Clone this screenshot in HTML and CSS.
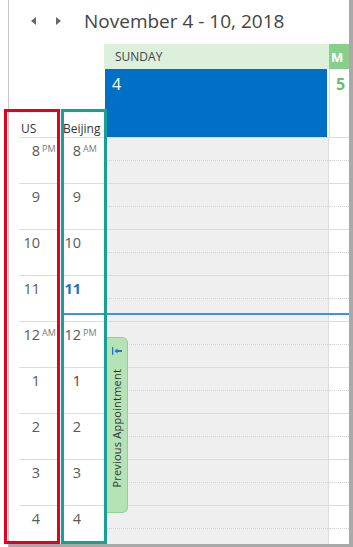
FILE: index.html
```html
<!DOCTYPE html>
<html>
<head>
<meta charset="utf-8">
<link rel="stylesheet" href="styles.css">
</head>
<body>
<div class="screen">
  <div class="app">
    <header class="top">
      <span class="tri tri-l"></span>
      <span class="tri tri-r"></span>
      <h1 class="title">November 4 - 10, 2018</h1>
    </header>
    <div class="main">
      <div class="gutter">
        <div class="tz us">
          <div class="tz-head">US</div>
          <div class="hr"><span class="num">8</span><span class="ap">PM</span></div>
          <div class="hr"><span class="num">9</span></div>
          <div class="hr"><span class="num">10</span></div>
          <div class="hr"><span class="num">11</span></div>
          <div class="hr"><span class="num">12</span><span class="ap">AM</span></div>
          <div class="hr"><span class="num">1</span></div>
          <div class="hr"><span class="num">2</span></div>
          <div class="hr"><span class="num">3</span></div>
          <div class="hr"><span class="num">4</span></div>
        </div>
        <div class="tz bj">
          <div class="tz-head">Beijing</div>
          <div class="hr"><span class="num">8</span><span class="ap">AM</span></div>
          <div class="hr"><span class="num">9</span></div>
          <div class="hr"><span class="num">10</span></div>
          <div class="hr"><span class="num now">11</span></div>
          <div class="hr"><span class="num">12</span><span class="ap">PM</span></div>
          <div class="hr"><span class="num red">1</span></div>
          <div class="hr"><span class="num">2</span></div>
          <div class="hr"><span class="num">3</span></div>
          <div class="hr"><span class="num">4</span></div>
        </div>
      </div>
      <div class="day sun">
        <div class="dhead">SUNDAY</div>
        <div class="ddate">4</div>
        <div class="grid">
          <div class="slot"><div class="half"></div><div class="half"></div></div>
          <div class="slot"><div class="half"></div><div class="half"></div></div>
          <div class="slot"><div class="half"></div><div class="half"></div></div>
          <div class="slot"><div class="half"></div><div class="half"></div></div>
          <div class="slot"><div class="half"></div><div class="half"></div></div>
          <div class="slot"><div class="half"></div><div class="half"></div></div>
          <div class="slot"><div class="half"></div><div class="half"></div></div>
          <div class="slot"><div class="half"></div><div class="half"></div></div>
          <div class="slot"><div class="half"></div><div class="half"></div></div>
        </div>
      </div>
      <div class="day mon">
        <div class="dhead">M</div>
        <div class="ddate">5</div>
        <div class="grid">
          <div class="slot"><div class="half"></div><div class="half"></div></div>
          <div class="slot"><div class="half"></div><div class="half"></div></div>
          <div class="slot"><div class="half"></div><div class="half"></div></div>
          <div class="slot"><div class="half"></div><div class="half"></div></div>
          <div class="slot"><div class="half"></div><div class="half"></div></div>
          <div class="slot"><div class="half"></div><div class="half"></div></div>
          <div class="slot"><div class="half"></div><div class="half"></div></div>
          <div class="slot"><div class="half"></div><div class="half"></div></div>
          <div class="slot"><div class="half"></div><div class="half"></div></div>
        </div>
      </div>
    </div>
  </div>
  <div class="nowline"></div>
  <div class="prev-tab">
    <svg class="prev-icon" width="10" height="8" viewBox="0 0 10 8">
      <rect x="0" y="0" width="1.3" height="8" fill="#2f74c0"/>
      <path d="M2.5 4 L5.5 1.2 L5.5 3.1 L10 3.1 L10 4.9 L5.5 4.9 L5.5 6.8 Z" fill="#2f74c0"/>
    </svg>
    <span class="prev-text">Previous Appointment</span>
  </div>
  <div class="mark mark-us"></div>
  <div class="mark mark-bj"></div>
</div>
</body>
</html>
```

FILE: styles.css
```css
* { box-sizing: border-box; }
html, body { margin: 0; padding: 0; background: #fff; }
body { font-family: "Open Sans", "Noto Sans", sans-serif; }

.screen {
  position: relative;
  width: 353px;
  height: 547px;
  overflow: hidden;
  background: #fff;
}

.app {
  margin-left: 8px;
  width: 345px;
  height: 547px;
  border-left: 1px solid #c8c8c8;
  border-right: 4px solid #a9a9a9;
  border-bottom: 3px solid #a9a9a9;
  overflow: hidden;
  display: flex;
  flex-direction: column;
}

.top {
  height: 44px;
  flex: none;
  display: flex;
  align-items: flex-start;
  padding-top: 9px;
}
.tri {
  width: 0;
  height: 0;
  margin-top: 8px;
  border-top: 4.5px solid transparent;
  border-bottom: 4.5px solid transparent;
}
.tri-l { margin-left: 22px; border-right: 5px solid #666; }
.tri-r { margin-left: 20px; border-left: 5px solid #666; }
.title {
  margin: 0 0 0 23px;
  font-weight: 400;
  font-size: 19px;
  line-height: 24px;
  color: #444;
  white-space: nowrap;
}

.main {
  flex: 1;
  display: flex;
  min-height: 0;
}

.gutter {
  width: 95px;
  flex: none;
  display: flex;
  background: #fff;
}
.tz { flex: none; }
.us { width: 51px; padding: 0 3px 0 10px; }
.bj { width: 44px; padding: 0 0 0 3px; }
.tz-head {
  height: 94px;
  border-bottom: 1px solid #dcdcdc;
  display: flex;
  align-items: flex-end;
  font-size: 12px;
  line-height: 14px;
  color: #333;
  padding-bottom: 1px;
}
.us .tz-head { padding-left: 2px; }
.hr {
  height: 46px;
  border-bottom: 1px solid #dcdcdc;
  display: flex;
  align-items: flex-start;
}
.num {
  text-align: right;
  font-size: 14.5px;
  line-height: 18px;
  padding-top: 4px;
  color: #5a5a5a;
}
.us .num { width: 21px; }
.bj .num { width: 18px; }
.num.now { color: #1e73c8; font-weight: 700; }
.num.red { color: #7c2b3b; }
.ap {
  margin-left: 2px;
  padding-top: 6px;
  font-size: 9px;
  line-height: 10px;
  color: #7a7a7a;
}

.day { flex: none; display: flex; flex-direction: column; }
.sun { width: 225px; }
.mon { width: 20px; }

.dhead {
  height: 25px;
  flex: none;
  display: flex;
  align-items: center;
  font-size: 12px;
  color: #444;
}
.sun .dhead { background: #dcf0dc; padding-left: 11px; }
.mon .dhead {
  background: #88d08a;
  color: #fff;
  font-weight: 700;
  font-size: 13px;
  padding-left: 2px;
}

.ddate {
  height: 69px;
  flex: none;
  font-size: 16px;
  line-height: 20px;
  padding-top: 5px;
  border-bottom: 1px solid #dcdcdc;
}
.sun .ddate {
  background: #0070c6;
  color: #fff;
  margin: 0 2px 0 1px;
  padding-left: 7px;
  border-bottom: none;
  height: 68px;
}
.sun .grid { border-top: 1px solid #dcdcdc; }
.mon .ddate {
  color: #6abf6e;
  font-weight: 700;
  padding-left: 6px;
  border-left: 1px solid #e2e2e2;
}

.grid { flex: 1; }
.sun .grid { background: #efefef; border-right: 1px solid #dcdcdc; }
.mon .grid { background: #fff; }
.slot { height: 46px; }
.half { height: 23px; }
.half:first-child { border-bottom: 1px dotted #d2d2d2; }
.half:last-child { border-bottom: 1px solid #dcdcdc; }

.nowline {
  position: absolute;
  left: 63px;
  top: 313px;
  width: 286px;
  height: 2px;
  background: #3a95e0;
}

.prev-tab {
  position: absolute;
  left: 106px;
  top: 337px;
  width: 22px;
  height: 176px;
  background: #b6e3b6;
  border: 1px solid #90d090;
  border-left: none;
  border-radius: 0 6px 6px 0;
  display: flex;
  flex-direction: column;
  align-items: center;
  padding-top: 9px;
}
.prev-icon { display: block; flex: none; }
.prev-text {
  margin-top: 14px;
  writing-mode: vertical-rl;
  transform: rotate(180deg);
  font-size: 11px;
  line-height: 13px;
  color: #333;
  letter-spacing: 0.2px;
  white-space: nowrap;
}

.mark {
  position: absolute;
  top: 109px;
  height: 435px;
}
.mark-us {
  left: 4px;
  width: 56px;
  border: 3px solid #e5001f;
}
.mark-bj {
  left: 61px;
  width: 46px;
  border: 3px solid #17a096;
}
```
